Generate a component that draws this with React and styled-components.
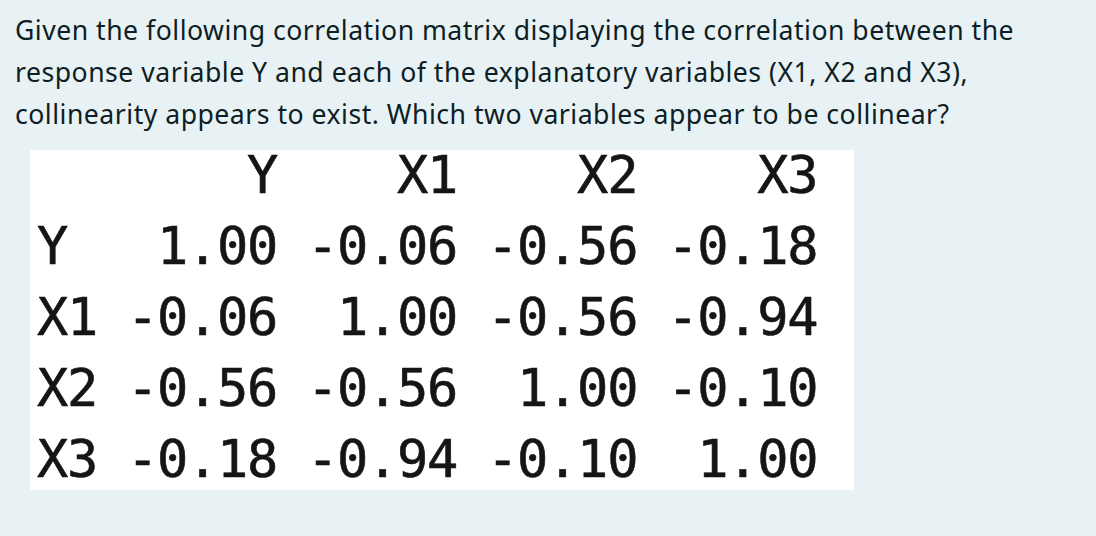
import styled, { createGlobalStyle } from "styled-components";

const GlobalStyle = createGlobalStyle`
  body {
    margin: 0;
    background: #e8f1f4;
  }
`;

const Page = styled.div`
  padding: 9px 0 0 15px;
  width: 1096px;
  height: 536px;
  box-sizing: border-box;
`;

const Question = styled.p`
  margin: 0;
  width: 1070px;
  font-family: "Noto Sans", "Open Sans", sans-serif;
  font-size: 26.6px;
  letter-spacing: 0.5px;
  line-height: 42px;
  white-space: nowrap;
  color: #0d1e25;
`;

const Matrix = styled.div`
  margin: 15px 0 0 15px;
  width: 824px;
  height: 340px;
  box-sizing: border-box;
  padding-left: 7px;
  background: #fff;
  display: flex;
  flex-direction: column;
  gap: 21px;
`;

const Row = styled.div`
  font-family: "DejaVu Sans Mono", monospace;
  font-size: 52px;
  letter-spacing: -1.3px;
  line-height: 50px;
  white-space: pre;
  color: #151515;
  -webkit-text-stroke: 0.6px #151515;
`;

const rows = [
  "       Y    X1    X2    X3",
  "Y   1.00 -0.06 -0.56 -0.18",
  "X1 -0.06  1.00 -0.56 -0.94",
  "X2 -0.56 -0.56  1.00 -0.10",
  "X3 -0.18 -0.94 -0.10  1.00",
];

export default function App() {
  return (
    <>
      <GlobalStyle />
      <Page>
        <Question>
          Given the following correlation matrix displaying the correlation between the
          <br />
          response variable Y and each of the explanatory variables (X1, X2 and X3),
          <br />
          collinearity appears to exist. Which two variables appear to be collinear?
        </Question>
        <Matrix>
          {rows.map((r) => (
            <Row key={r}>{r}</Row>
          ))}
        </Matrix>
      </Page>
    </>
  );
}
